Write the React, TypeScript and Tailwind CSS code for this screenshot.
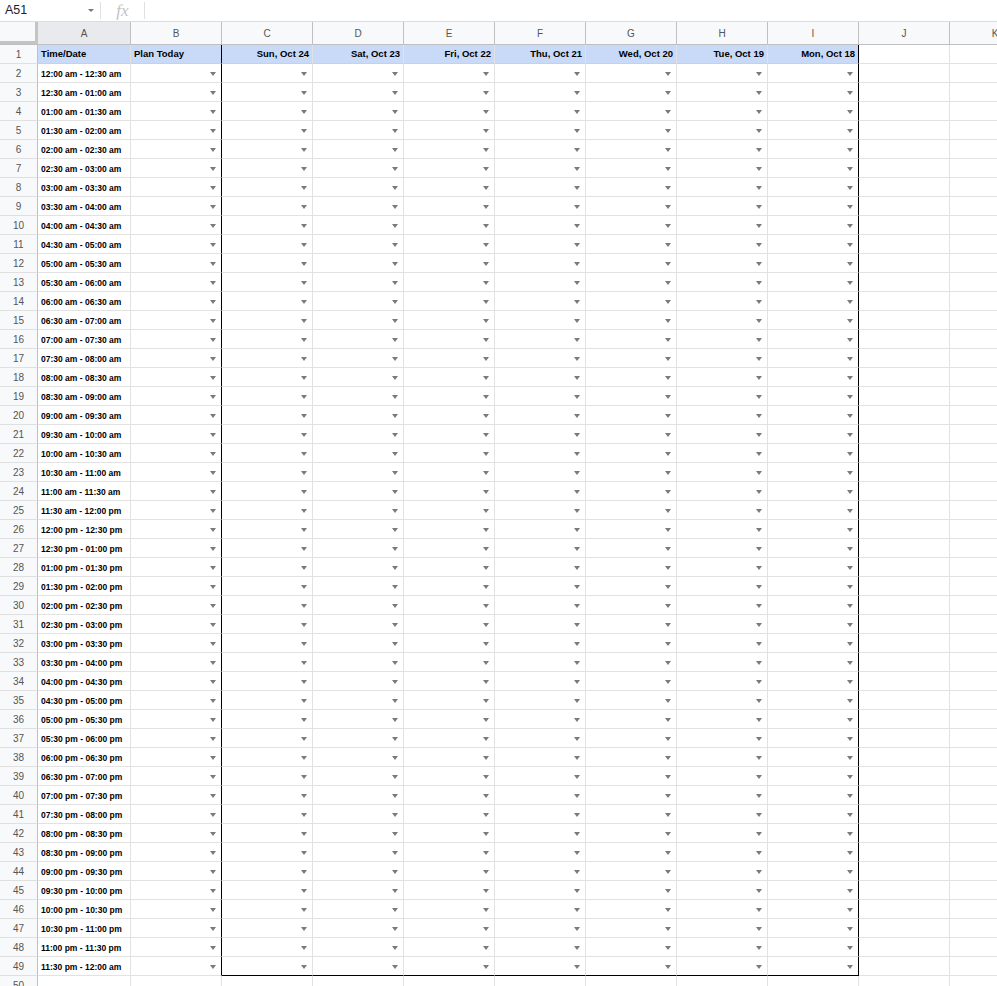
import React from "react";

const COLS = [
  { l: "A", w: 93 },
  { l: "B", w: 91 },
  { l: "C", w: 91 },
  { l: "D", w: 91 },
  { l: "E", w: 91 },
  { l: "F", w: 91 },
  { l: "G", w: 91 },
  { l: "H", w: 91 },
  { l: "I", w: 91 },
  { l: "J", w: 91 },
  { l: "K", w: 91 },
];

const HEAD = ["Time/Date", "Plan Today", "Sun, Oct 24", "Sat, Oct 23", "Fri, Oct 22", "Thu, Oct 21", "Wed, Oct 20", "Tue, Oct 19", "Mon, Oct 18"];

function fmt(mins: number) {
  const m = mins % (24 * 60);
  const h24 = Math.floor(m / 60);
  const mm = m % 60;
  const ap = h24 < 12 ? "am" : "pm";
  let h = h24 % 12;
  if (h === 0) h = 12;
  return `${String(h).padStart(2, "0")}:${String(mm).padStart(2, "0")} ${ap}`;
}

const TIMES = Array.from({ length: 48 }, (_, i) => `${fmt(i * 30)} - ${fmt(i * 30 + 30)}`);

const font = { fontFamily: '"Liberation Sans", Arial, sans-serif' };

function Arrow() {
  return <div className="w-0 h-0 border-x-[3.5px] border-x-transparent border-t-[4px] border-t-[#7a7a7a] mt-[1px]" />;
}

export default function App() {
  const rows = Array.from({ length: 50 }, (_, i) => i + 1);
  return (
    <div className="w-[997px] h-[986px] overflow-hidden bg-white" style={font}>
      {/* formula bar */}
      <div className="h-[22px] flex items-center border-b border-[#dadce0] bg-white">
        <div className="w-[100px] flex items-center pl-[5px] pr-[6px]">
          <span className="text-[12.5px] text-[#222] flex-1">A51</span>
          <div className="w-0 h-0 border-x-[3px] border-x-transparent border-t-[3px] border-t-[#777]" />
        </div>
        <div className="w-px h-[17px] bg-[#e0e0e0]" />
        <div className="w-[43px] flex items-center justify-center">
          <span className="text-[17px] italic text-[#c4c4c4] leading-none" style={{ fontFamily: '"Liberation Serif", serif' }}>fx</span>
        </div>
        <div className="w-px h-[17px] bg-[#e0e0e0]" />
      </div>
      {/* column header row */}
      <div className="h-[23px] flex bg-[#f8f9fa] border-b border-[#c0c0c0]">
        <div className="w-[38px] shrink-0 bg-[#f8f9fa] border-r-[3px] border-r-[#c4c4c4] border-b-[3px] border-b-[#c4c4c4] h-[22px]" />
        {COLS.map((c) => (
          <div
            key={c.l}
            className={`shrink-0 flex items-center justify-center text-[10px] text-[#555] border-r border-[#c0c0c0] ${c.l === "A" ? "bg-[#e8eaed]" : ""}`}
            style={{ width: c.w }}
          >
            {c.l}
          </div>
        ))}
      </div>
      {rows.map((r) => {
        const inBox = r <= 49;
        return (
          <div key={r} className="h-[19px] flex">
            <div className="w-[38px] shrink-0 flex items-center justify-center text-[10px] text-[#555] bg-[#f8f9fa] border-r border-r-[#c0c0c0] border-b border-b-[#e0e0e0]">
              {r}
            </div>
            {COLS.map((c, ci) => {
              const rightBlack = inBox && (ci === 1 || ci === 8);
              const bottomBlack = r === 49 && ci >= 2 && ci <= 8;
              const blue = r === 1 && ci <= 8;
              return (
                <div
                  key={c.l}
                  className={`shrink-0 flex border-r border-b ${rightBlack ? "border-r-black" : "border-r-[#e2e2e2]"} ${bottomBlack ? "border-b-black" : blue ? "border-b-[#c2d1ec]" : "border-b-[#e2e2e2]"} ${blue ? "bg-[#c9daf8]" : ""}`}
                  style={{ width: c.w }}
                >
                  {r === 1 && ci === 0 && (
                    <div className="flex-1 flex items-center pl-[3px] text-[9.5px] font-bold text-black">{HEAD[0]}</div>
                  )}
                  {r === 1 && ci === 1 && (
                    <div className="flex-1 flex items-center pl-[3px] text-[9.5px] font-bold text-black">{HEAD[1]}</div>
                  )}
                  {r === 1 && ci >= 2 && ci <= 8 && (
                    <div className="flex-1 flex items-center justify-end pr-[3px] text-[9.5px] font-bold text-black">{HEAD[ci]}</div>
                  )}
                  {r >= 2 && r <= 49 && ci === 0 && (
                    <div className="flex-1 flex items-center pt-[2px] pl-[3px] text-[8.5px] font-bold text-black whitespace-nowrap">{TIMES[r - 2]}</div>
                  )}
                  {r >= 2 && r <= 49 && ci >= 1 && ci <= 8 && (
                    <div className="flex-1 flex items-center justify-end pr-[5px]">
                      <Arrow />
                    </div>
                  )}
                </div>
              );
            })}
          </div>
        );
      })}
    </div>
  );
}
